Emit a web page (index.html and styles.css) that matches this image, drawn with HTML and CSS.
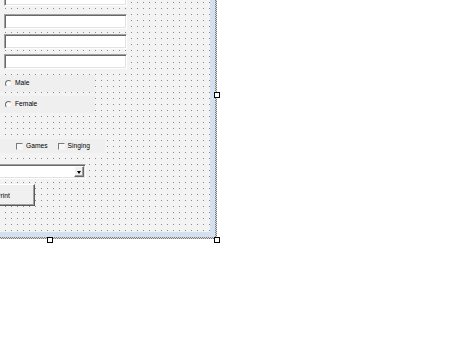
FILE: index.html
```html
<!DOCTYPE html>
<html>
<head>
<meta charset="utf-8">
<link rel="stylesheet" href="styles.css">
</head>
<body>
<div class="designer">
  <div class="selection">
    <div class="form">
      <div class="textbox tb-first"></div>
      <div class="textbox tb-next"></div>
      <div class="textbox tb-rest"></div>
      <div class="textbox tb-rest"></div>
      <div class="option opt-male"><span class="radio"></span><span class="label">Male</span></div>
      <div class="option opt-female"><span class="radio"></span><span class="label">Female</span></div>
      <div class="checks">
        <span class="check"></span><span class="label lbl-games">Games</span>
        <span class="check"></span><span class="label">Singing</span>
      </div>
      <div class="combo"><span class="drop"><span class="arrow"></span></span></div>
      <div class="button"><span class="btn-text">Print</span></div>
    </div>
  </div>
  <span class="handle h-right"></span>
  <span class="handle h-bottom"></span>
  <span class="handle h-corner"></span>
</div>
</body>
</html>
```

FILE: styles.css
```css
html, body {
  margin: 0;
  padding: 0;
  background: #ffffff;
}

body {
  width: 474px;
  height: 348px;
  overflow: hidden;
  font-family: "Liberation Sans", Arial, sans-serif;
  font-size: 6.7px;
  color: #000;
}

* {
  box-sizing: border-box;
}

.designer {
  position: relative;
  width: 220px;
  height: 243px;
}

.selection {
  width: 217px;
  height: 239px;
  padding: 0 2px 2px 0;
  background: repeating-conic-gradient(#7c7c7c 0 25%, #d8d8d8 0 50%) 0 0 / 2px 2px;
}

.form {
  width: 215px;
  height: 237px;
  display: flex;
  flex-direction: column;
  align-items: flex-start;
  overflow: hidden;
  border-right: 5px solid #d3e0f0;
  border-bottom: 5px solid #d3e0f0;
  background-color: #f3f3f3;
  background-image: conic-gradient(at 1px 1px, #f3f3f3 75%, #8a8a8a 0);
  background-size: 6px 6px;
  background-position: 5px 2px;
}

.textbox {
  flex: none;
  width: 123px;
  height: 15px;
  margin-left: 4px;
  background: #fff;
  border: 1px solid;
  border-color: #a0a0a0 #ffffff #ffffff #a0a0a0;
  box-shadow: inset 1px 1px 0 #696969, inset -1px -1px 0 #e3e3e3;
}

.tb-first { margin-top: -9px; }
.tb-next { margin-top: 8px; }
.tb-rest { margin-top: 5px; }

.option {
  flex: none;
  display: flex;
  align-items: center;
  width: 95px;
  height: 17px;
  padding-left: 5px;
  background: #efefef;
}

.opt-male { margin-top: 6px; }
.opt-female { margin-top: 4px; }

.radio {
  width: 7px;
  height: 7px;
  margin-right: 3px;
  border-radius: 50%;
  border: 1px solid;
  border-color: #6e6e6e #ececec #ececec #6e6e6e;
  background: #fafafa;
}

.label {
  line-height: 1;
  white-space: nowrap;
  color: #000;
}

.checks {
  flex: none;
  display: flex;
  align-items: center;
  width: 105px;
  height: 14px;
  margin-top: 26px;
  padding-left: 16px;
  background: #efefef;
}

.check {
  width: 7px;
  height: 7px;
  margin-right: 3px;
  border: 1px solid;
  border-color: #7a7a7a #f4f4f4 #f4f4f4 #7a7a7a;
  background: #f7f7f7;
}

.lbl-games {
  margin-right: 10px;
}

.combo {
  flex: none;
  display: flex;
  justify-content: flex-end;
  align-items: center;
  width: 126px;
  height: 15px;
  margin-top: 11px;
  margin-left: -40px;
  padding-right: 1px;
  background: #fff;
  border: 1px solid;
  border-color: #a0a0a0 #ffffff #ffffff #a0a0a0;
  box-shadow: inset 1px 1px 0 #696969, inset -1px -1px 0 #e3e3e3;
}

.drop {
  display: flex;
  align-items: center;
  justify-content: center;
  width: 10px;
  height: 11px;
  background: #f0f0f0;
  border: 1px solid;
  border-color: #ffffff #696969 #696969 #ffffff;
  box-shadow: inset -1px -1px 0 #a0a0a0;
}

.arrow {
  width: 0;
  height: 0;
  border-left: 2.5px solid transparent;
  border-right: 2.5px solid transparent;
  border-top: 3px solid #000;
  margin-top: 1px;
}

.button {
  flex: none;
  display: flex;
  align-items: center;
  justify-content: center;
  width: 64px;
  height: 22px;
  margin-top: 5px;
  margin-left: -29px;
  background: #f0f0f0;
  border: 1px solid;
  border-color: #ffffff #5a5a5a #5a5a5a #ffffff;
  box-shadow: inset -1px -1px 0 #a0a0a0;
}

.btn-text {
  white-space: nowrap;
  color: #000;
}

.handle {
  position: absolute;
  width: 6px;
  height: 6px;
  background: #fff;
  border: 1px solid #000;
}

.h-right { left: 214px; top: 92px; }
.h-bottom { left: 47px; top: 237px; }
.h-corner { left: 214px; top: 237px; }
```
